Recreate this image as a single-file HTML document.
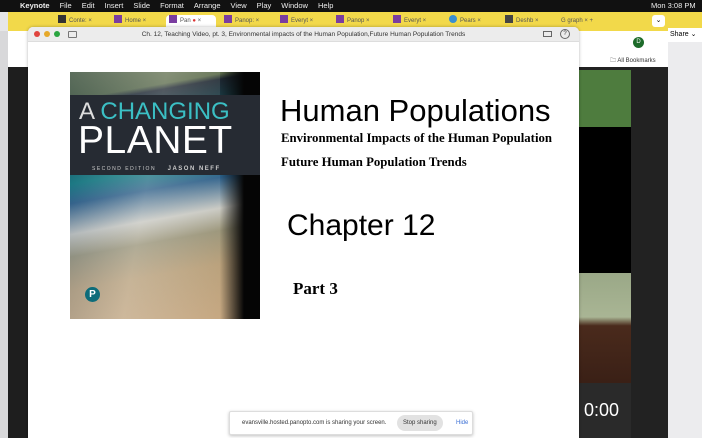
<!DOCTYPE html>
<html><head><meta charset="utf-8"><style>
*{margin:0;padding:0;box-sizing:border-box}
body{width:702px;height:438px;overflow:hidden;position:relative;background:#e6e6e8;font-family:"Liberation Sans",sans-serif}
.abs{position:absolute}
.menu{left:0;top:0;width:702px;height:12px;background:#111;color:#eee;font-size:7.5px;line-height:12px;white-space:nowrap}
.menu span{margin-right:10px}
.tabs{left:8px;top:12px;width:694px;height:19px;background:#f2d94a}
.tab{position:absolute;top:3px;height:13px;font-size:6px;line-height:13px;color:#555;white-space:nowrap}
.tab i{display:inline-block;width:8px;height:8px;background:#7a3da0;vertical-align:-1px;margin-right:3px}
</style></head><body>
<div class="abs menu"><span style="margin-left:10px"></span><b style="margin-right:10px">Keynote</b><span>File</span><span>Edit</span><span>Insert</span><span>Slide</span><span>Format</span><span>Arrange</span><span>View</span><span>Play</span><span>Window</span><span>Help</span><span style="position:absolute;left:651px">Mon 3:08 PM</span></div>
<div class="abs tabs">
<div class="tab" style="left:50px"><i style="background:#333"></i>Conte: ×</div>
<div class="tab" style="left:106px"><i></i>Home ×</div>
<div class="tab" style="left:158px;background:#fff;width:50px;padding-left:3px;border-radius:4px 4px 0 0"><i></i>Pan <span style="color:#d33">●</span> ×</div>
<div class="tab" style="left:216px"><i></i>Panop: ×</div>
<div class="tab" style="left:272px"><i></i>Everyt ×</div>
<div class="tab" style="left:328px"><i></i>Panop ×</div>
<div class="tab" style="left:385px"><i></i>Everyt ×</div>
<div class="tab" style="left:441px"><i style="background:#3a8fd0;border-radius:50%"></i>Pears ×</div>
<div class="tab" style="left:497px"><i style="background:#444"></i>Deshb ×</div>
<div class="tab" style="left:553px">G graph ×  +</div>
<div class="abs" style="left:644px;top:3px;width:13px;height:12px;background:#fff;border-radius:3px;font-size:7px;text-align:center;line-height:12px">⌄</div>
</div>
<div class="abs" style="left:8px;top:31px;width:660px;height:36px;background:#fff"></div>
<div class="abs" style="left:668px;top:31px;width:34px;height:407px;background:#ececee"></div>
<div class="abs" style="left:668px;top:28px;width:34px;height:14px;background:#fff;font-size:7px;line-height:14px;padding-left:2px">Share ⌄</div>
<div class="abs" style="left:8px;top:67px;width:20px;height:371px;background:#1e1e1e"></div>
<div class="abs" style="left:0;top:31px;width:8px;height:407px;background:#d8d8da"></div>
<div class="abs" style="left:633px;top:37px;width:11px;height:11px;border-radius:50%;background:#1d6b2a;color:#fff;font-size:6px;text-align:center;line-height:11px">D</div>
<div class="abs" style="left:610px;top:56px;font-size:6px;color:#333">🗀 All Bookmarks</div>
<div class="abs" style="left:579px;top:67px;width:89px;height:371px;background:#222"></div>
<div class="abs" style="left:579px;top:70px;width:52px;height:57px;background:#4e7c3e"></div>
<div class="abs" style="left:579px;top:127px;width:52px;height:146px;background:#000"></div>
<div class="abs" style="left:579px;top:273px;width:52px;height:110px;background:linear-gradient(#9aa887 0%,#a9b594 40%,#4a2a1c 48%,#3a2016 100%)"></div>
<div class="abs" style="left:579px;top:383px;width:52px;height:55px;background:#2a2a2a"></div>
<div class="abs" style="left:584px;top:400px;color:#fff;font-size:18px">0:00</div>
<div class="abs" style="left:28px;top:27px;width:551px;height:411px;background:#fff;border-radius:5px 5px 0 0;overflow:hidden;box-shadow:0 0 3px rgba(0,0,0,.3)">
<div style="height:15px;background:#ececec;border-bottom:1px solid #ddd;position:relative;font-size:6.5px;line-height:15px;color:#333;text-align:center">
<span class="abs" style="left:6px;top:4px;width:6px;height:6px;border-radius:50%;background:#e0443e"></span>
<span class="abs" style="left:16px;top:4px;width:6px;height:6px;border-radius:50%;background:#e6a92a"></span>
<span class="abs" style="left:26px;top:4px;width:6px;height:6px;border-radius:50%;background:#2aa540"></span>
<span class="abs" style="left:40px;top:4px;width:9px;height:7px;border:1px solid #777;border-radius:1px"></span>
Ch. 12, Teaching Video, pt. 3, Environmental impacts of the Human Population,Future Human Population Trends
<span class="abs" style="left:515px;top:4px;width:9px;height:6px;border:1px solid #666"></span>
<span class="abs" style="left:532px;top:2px;width:10px;height:10px;border:1px solid #666;border-radius:50%;font-size:6px;line-height:8px">?</span>
</div>
</div>
<div class="abs" style="left:70px;top:72px;width:190px;height:247px;overflow:hidden;background:linear-gradient(170deg,#6e7a58 0%,#5b6b4a 10%,#1d2630 12%,#0f7c80 40%,#2b5e88 47%,#c9c9c2 58%,#9a9478 66%,#b9a07a 78%,#c8a983 100%)">
<div class="abs" style="right:0;top:0;width:40px;height:247px;background:linear-gradient(90deg,rgba(0,0,0,0),#050505 60%)"></div>
<div class="abs" style="left:0;top:0;width:150px;height:247px;background:linear-gradient(100deg,rgba(20,60,110,.2),rgba(240,240,240,.25) 50%,rgba(0,0,0,0))"></div>
<div class="abs" style="left:0;top:23px;width:190px;height:80px;background:#262b33"></div>
<div class="abs" style="left:9px;top:26px;font-size:24px;color:#ddd;white-space:nowrap">A <span style="color:#3bbfc4">CHANGING</span></div>
<div class="abs" style="left:8px;top:47px;font-size:39px;color:#fff;letter-spacing:0.5px">PLANET</div>
<div class="abs" style="left:22px;top:94px;font-size:5px;color:#ccc;letter-spacing:1.5px;white-space:nowrap">SECOND EDITION &nbsp;&nbsp; <b style="font-size:6px">JASON NEFF</b></div>
<div class="abs" style="left:15px;top:215px;width:15px;height:15px;border-radius:50%;background:#0d6c7a;color:#fff;font-size:10px;font-weight:bold;text-align:center;line-height:15px">P</div>
</div>
<div class="abs" style="left:280px;top:93px;font-size:31px;color:#000;white-space:nowrap">Human Populations</div>
<div class="abs" style="left:281px;top:131px;font-family:'Liberation Serif',serif;font-weight:bold;font-size:12.8px;white-space:nowrap">Environmental Impacts of the Human Population</div>
<div class="abs" style="left:281px;top:155px;font-family:'Liberation Serif',serif;font-weight:bold;font-size:12.8px;white-space:nowrap">Future Human Population Trends</div>
<div class="abs" style="left:287px;top:209px;font-size:30px;white-space:nowrap">Chapter 12</div>
<div class="abs" style="left:293px;top:279px;font-family:'Liberation Serif',serif;font-weight:bold;font-size:17px">Part 3</div>
<div class="abs" style="left:229px;top:411px;width:244px;height:24px;background:#fff;border:1px solid #ddd;box-shadow:0 1px 3px rgba(0,0,0,.25);border-radius:2px;font-size:6px;color:#333;line-height:22px;white-space:nowrap">
<span style="margin-left:12px">evansville.hosted.panopto.com is sharing your screen.</span>
<span class="abs" style="left:167px;top:3px;height:16px;line-height:16px;padding:0 6px;background:#e2e2e2;border-radius:8px">Stop sharing</span>
<span class="abs" style="left:226px;color:#3b6fd4">Hide</span>
</div>
</body></html>
